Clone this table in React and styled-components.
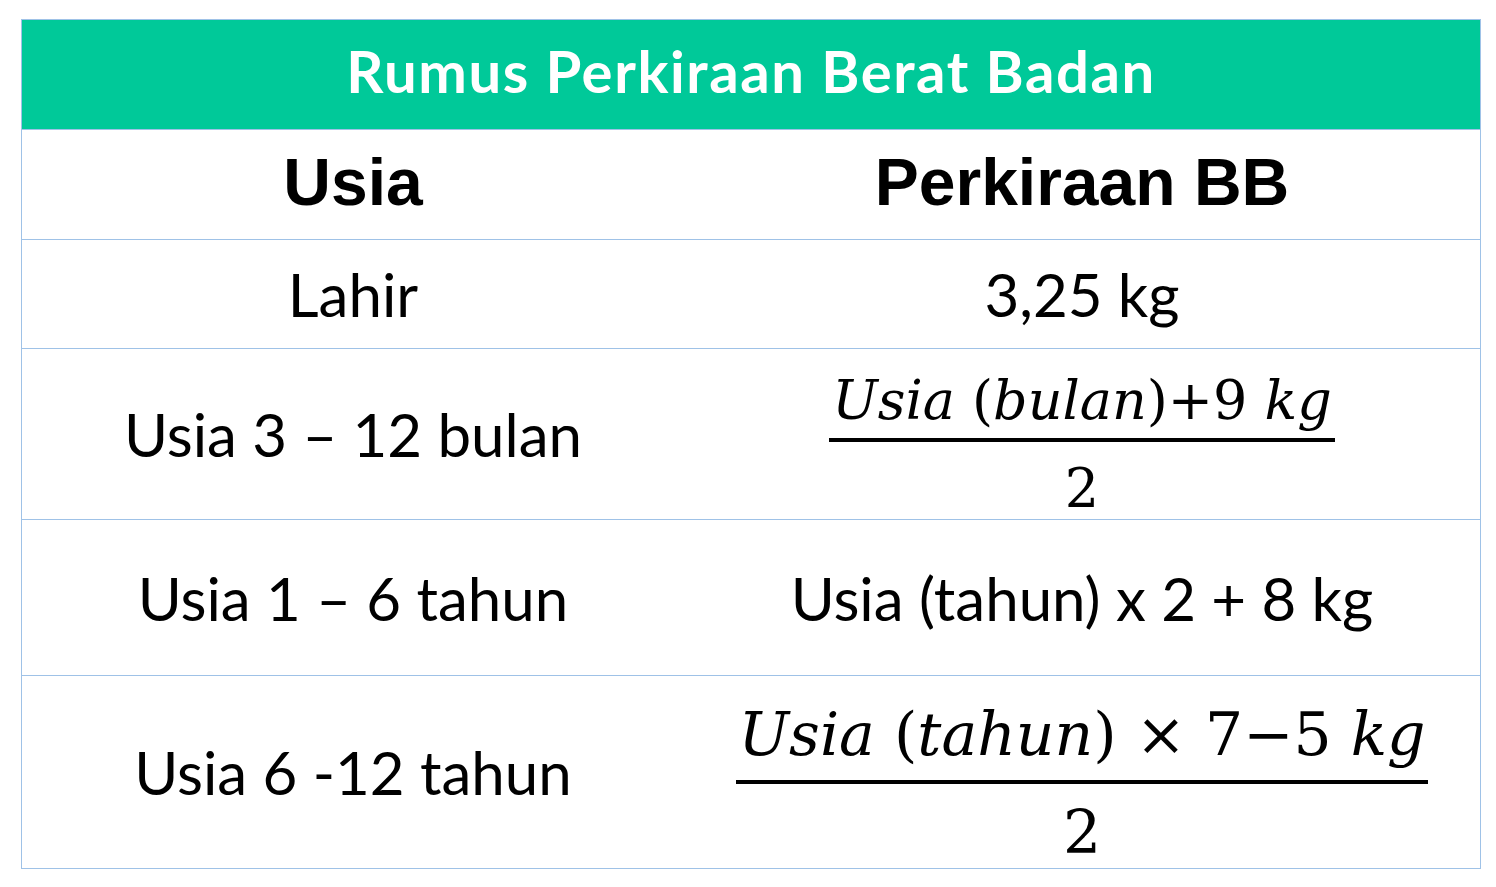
import { Fragment } from "react";
import styled, { createGlobalStyle } from "styled-components";

const GlobalStyle = createGlobalStyle`
  *, *::before, *::after {
    box-sizing: border-box;
  }
  body {
    margin: 0;
    background: #ffffff;
  }
`;

const BORDER = "#9fc2e7";

const rows = [
  { age: "Lahir", height: 109, value: { kind: "text", text: "3,25 kg" } },
  {
    age: "Usia 3 – 12 bulan",
    height: 171,
    value: {
      kind: "frac",
      size: 54,
      top: 17,
      gap: 5,
      den: 20,
      parts: [["Usia", 1], [" (", 0], ["bulan", 1], [")+9 ", 0], ["kg", 1]],
    },
  },
  { age: "Usia 1 – 6 tahun", height: 156, value: { kind: "text", text: "Usia (tahun) x 2 + 8 kg" } },
  {
    age: "Usia 6 -12 tahun",
    height: 193,
    value: {
      kind: "frac",
      size: 60,
      top: 15,
      gap: 10,
      den: 18,
      parts: [["Usia", 1], [" (", 0], ["tahun", 1], [") × 7−5 ", 0], ["kg", 1]],
    },
  },
];

const Page = styled.div`
  padding: 19px 16px 0 21px;
`;

const Table = styled.div`
  width: 1460px;
  border: 1px solid ${BORDER};
  display: grid;
  grid-template-columns: 662px 1fr;
`;

const Title = styled.div`
  grid-column: 1 / -1;
  height: 109px;
  padding-bottom: 8px;
  background: #00c999;
  color: #ffffff;
  font-family: Lato, "Open Sans", sans-serif;
  font-weight: 700;
  font-size: 58px;
  letter-spacing: 1.6px;
  display: flex;
  align-items: center;
  justify-content: center;
`;

const Cell = styled.div`
  height: ${(p) => p.$h}px;
  border-top: 1px solid ${BORDER};
  display: flex;
  align-items: center;
  justify-content: center;
  color: #000;
  font-family: Lato, "Open Sans", sans-serif;
  font-size: 60px;
  white-space: pre;
`;

const HeadCell = styled(Cell)`
  font-family: "Liberation Sans", Arial, sans-serif;
  font-weight: 700;
  font-size: 66px;
  padding-bottom: 6px;
`;

const Frac = styled.div`
  display: flex;
  flex-direction: column;
  align-items: center;
  padding-top: ${(p) => p.$top}px;
  font-family: "DejaVu Serif", "Liberation Serif", serif;
  font-size: ${(p) => p.$size}px;
`;

const Num = styled.div`
  padding: 0 3px ${(p) => p.$gap}px;
  border-bottom: 4px solid #000;
  line-height: 1.2;
  white-space: pre;
`;

const Den = styled.div`
  padding-top: ${(p) => p.$den}px;
  line-height: 1;
`;

const Part = styled.span`
  font-style: ${(p) => (p.$italic ? "italic" : "normal")};
`;

const Formula = ({ v }) => (
  <Frac $size={v.size} $top={v.top}>
    <Num $gap={v.gap}>
      {v.parts.map(([text, italic], i) => (
        <Part key={i} $italic={italic}>
          {text}
        </Part>
      ))}
    </Num>
    <Den $den={v.den}>2</Den>
  </Frac>
);

export default function App() {
  return (
    <Page>
      <GlobalStyle />
      <Table>
        <Title>Rumus Perkiraan Berat Badan</Title>
        <HeadCell $h={110}>Usia</HeadCell>
        <HeadCell $h={110}>Perkiraan BB</HeadCell>
        {rows.map((r) => (
          <Fragment key={r.age}>
            <Cell $h={r.height}>{r.age}</Cell>
            <Cell $h={r.height}>
              {r.value.kind === "text" ? r.value.text : <Formula v={r.value} />}
            </Cell>
          </Fragment>
        ))}
      </Table>
    </Page>
  );
}
